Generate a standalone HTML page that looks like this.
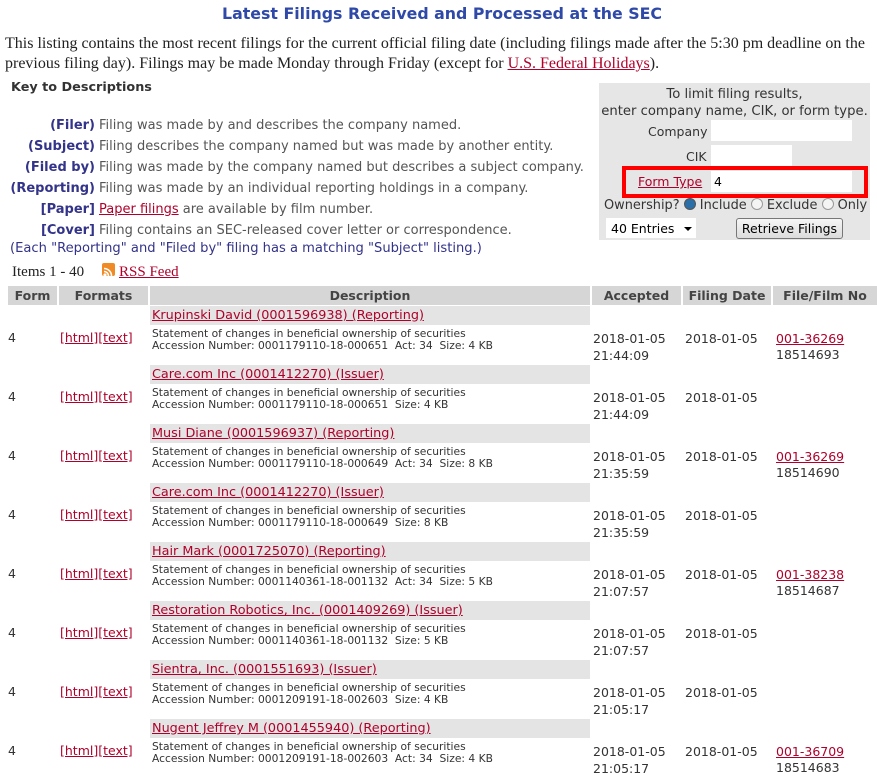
<!DOCTYPE html>
<html><head><meta charset="utf-8">
<style>
body{margin:0;width:877px;height:767px;overflow:hidden;background:#fff;position:relative;font-family:"DejaVu Sans","Liberation Sans",sans-serif;color:#333;}
.a{position:absolute;white-space:nowrap;}
a,.lk{color:#b0002a;text-decoration:underline;}
.title{left:0;width:884px;text-align:center;top:4px;font-size:15.8px;font-weight:bold;color:#2f49a9;}
.serif{font-family:"Liberation Serif",serif;font-size:16px;color:#222;}
.key{font-size:13px;color:#555;}
.key b{color:#33338a;}
.hd{position:absolute;top:286px;height:19px;background:#d6d6d6;font-weight:bold;font-size:12.5px;color:#444;text-align:center;line-height:19px;}
.t{font-size:12.5px;color:#333;}
.band{position:absolute;left:150px;width:440px;height:19px;background:#e4e4e4;}
.sm{font-size:10.7px;color:#333;}
</style></head><body>
<div class="a title">Latest Filings Received and Processed at the SEC</div>
<div class="a serif" style="left:5px;top:34px;line-height:20px">This listing contains the most recent filings for the current official filing date (including filings made after the 5:30 pm deadline on the<br>previous filing day). Filings may be made Monday through Friday (except for <a>U.S. Federal Holidays</a>).</div>
<div class="a" style="left:11px;top:80px;font-size:12.8px;font-weight:bold;color:#333">Key to Descriptions</div>
<div class="a key" style="left:0;top:115px;line-height:21px;text-align:right;width:95px">
<b>(Filer)</b><br><b>(Subject)</b><br><b>(Filed by)</b><br><b>(Reporting)</b><br><b>[Paper]</b><br><b>[Cover]</b></div>
<div class="a key" style="left:99px;top:115px;line-height:21px">
Filing was made by and describes the company named.<br>Filing describes the company named but was made by another entity.<br>Filing was made by the company named but describes a subject company.<br>Filing was made by an individual reporting holdings in a company.<br><a>Paper filings</a> are available by film number.<br>Filing contains an SEC-released cover letter or correspondence.</div>
<div class="a key" style="left:10px;top:241px;color:#33338a;font-size:13.1px">(Each "Reporting" and "Filed by" filing has a matching "Subject" listing.)</div>
<div class="a serif" style="left:12px;top:264px;font-size:15px">Items 1 - 40</div>
<div class="a" style="left:102px;top:263px;width:13px;height:13px;background:#f08a24;border-radius:2px;overflow:hidden">
<svg width="13" height="13"><circle cx="3" cy="10" r="1.6" fill="#fff"/><path d="M2 6.5a4.5 4.5 0 0 1 4.5 4.5M2 3.5a7.5 7.5 0 0 1 7.5 7.5" stroke="#fff" stroke-width="1.6" fill="none"/></svg></div>
<div class="a serif" style="left:119px;top:264px;font-size:15px"><a>RSS Feed</a></div>

<div class="a" style="left:599px;top:83px;width:271px;height:157px;background:#e6e6e6"></div>
<div class="a t" style="left:599px;top:86px;width:271px;text-align:center;line-height:17px;color:#333;font-size:13.2px">To limit filing results,<br>enter company name, CIK, or form type.</div>
<div class="a t" style="left:648px;top:124px">Company</div>
<div class="a" style="left:711px;top:120px;width:141px;height:21px;background:#fff"></div>
<div class="a t" style="left:686px;top:149px">CIK</div>
<div class="a" style="left:711px;top:145px;width:81px;height:21px;background:#fff"></div>
<div class="a" style="left:622px;top:166px;width:238px;height:24px;border:4px solid #f00"></div>
<div class="a t" style="left:638px;top:174px"><span class="lk">Form Type</span></div>
<div class="a" style="left:711px;top:171px;width:141px;height:21px;background:#fff"></div>
<div class="a t" style="left:714px;top:174px;color:#000">4</div>
<div class="a t" style="left:604px;top:198px;font-size:12.9px">Ownership? <span style="display:inline-block;width:10px;height:10px;border-radius:50%;background:#2a6fa8;border:1px solid #555;vertical-align:-1px"></span> Include <span style="display:inline-block;width:10px;height:10px;border-radius:50%;background:#f4f4f4;border:1px solid #999;vertical-align:-1px"></span> Exclude <span style="display:inline-block;width:10px;height:10px;border-radius:50%;background:#f4f4f4;border:1px solid #999;vertical-align:-1px"></span> Only</div>
<div class="a" style="left:606px;top:218px;width:90px;height:20px;background:#fff"></div>
<div class="a t" style="left:611px;top:221px;color:#000">40 Entries</div>
<div class="a" style="left:684px;top:227px;width:0;height:0;border-left:4px solid transparent;border-right:4px solid transparent;border-top:4px solid #000"></div>
<div class="a t" style="left:736px;top:218px;width:105px;height:19px;border:1px solid #777;border-radius:3px;background:linear-gradient(#f6f6f6,#dcdcdc);text-align:center;line-height:19px;color:#000">Retrieve Filings</div>

<div class="hd" style="left:8px;width:49px">Form</div>
<div class="hd" style="left:59px;width:89px">Formats</div>
<div class="hd" style="left:150px;width:440px">Description</div>
<div class="hd" style="left:592px;width:89px">Accepted</div>
<div class="hd" style="left:683px;width:88px">Filing Date</div>
<div class="hd" style="left:773px;width:104px">File/Film No</div>

<div id="rows"></div>
<script>
var d=[
["Krupinski David (0001596938) (Reporting)","0001179110-18-000651","Act: 34&nbsp; Size: 4 KB","21:44:09","001-36269","18514693"],
["Care.com Inc (0001412270) (Issuer)","0001179110-18-000651","Size: 4 KB","21:44:09","",""],
["Musi Diane (0001596937) (Reporting)","0001179110-18-000649","Act: 34&nbsp; Size: 8 KB","21:35:59","001-36269","18514690"],
["Care.com Inc (0001412270) (Issuer)","0001179110-18-000649","Size: 8 KB","21:35:59","",""],
["Hair Mark (0001725070) (Reporting)","0001140361-18-001132","Act: 34&nbsp; Size: 5 KB","21:07:57","001-38238","18514687"],
["Restoration Robotics, Inc. (0001409269) (Issuer)","0001140361-18-001132","Size: 5 KB","21:07:57","",""],
["Sientra, Inc. (0001551693) (Issuer)","0001209191-18-002603","Size: 4 KB","21:05:17","",""],
["Nugent Jeffrey M (0001455940) (Reporting)","0001209191-18-002603","Act: 34&nbsp; Size: 4 KB","21:05:17","001-36709","18514683"]];
var h="";
d.forEach(function(r,i){var t=306+59*i;
h+='<div class="band" style="top:'+t+'px"></div>';
h+='<div class="a t" style="left:152px;top:'+(t+2)+'px;font-size:12.8px"><span class="lk">'+r[0]+'</span></div>';
h+='<div class="a sm" style="left:152px;top:'+(t+22)+'px;line-height:12px">Statement of changes in beneficial ownership of securities<br>Accession Number: '+r[1]+'&nbsp; '+r[2]+'</div>';
h+='<div class="a t" style="left:8px;top:'+(t+24)+'px">4</div>';
h+='<div class="a t" style="left:60px;top:'+(t+24)+'px"><span class="lk">[html]</span><span class="lk">[text]</span></div>';
h+='<div class="a t" style="left:593px;top:'+(t+25)+'px">2018-01-05</div>';
h+='<div class="a t" style="left:593px;top:'+(t+42)+'px">'+r[3]+'</div>';
h+='<div class="a t" style="left:685px;top:'+(t+25)+'px">2018-01-05</div>';
if(r[4]){h+='<div class="a t" style="left:776px;top:'+(t+25)+'px"><span class="lk">'+r[4]+'</span></div>';
h+='<div class="a t" style="left:776px;top:'+(t+41)+'px">'+r[5]+'</div>';}
});
document.getElementById("rows").innerHTML=h;
</script>
</body></html>
